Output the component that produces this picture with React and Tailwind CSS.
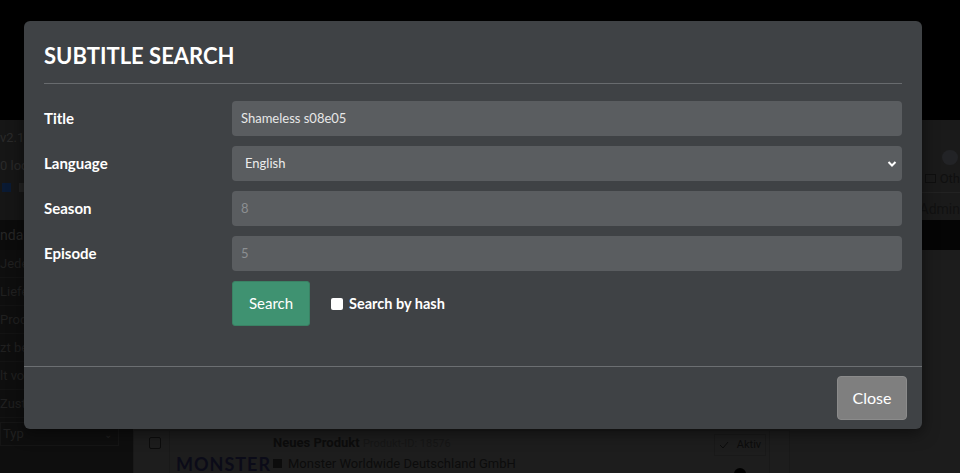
import { useState } from "react";

const fields = [
  { label: "Title", value: "Shameless s08e05", muted: false },
  { label: "Language", value: "English", select: true },
  { label: "Season", value: "8", muted: true },
  { label: "Episode", value: "5", muted: true },
];

const sidebarRows = ["Jedes", "Liefe", "Prod", "zt be", "lt vor", "Zust"];

function Background() {
  return (
    <div className="flex h-full w-full flex-col bg-[#1c1c1c] font-['Roboto',sans-serif]">
      <div className="h-[120px] shrink-0 bg-black" />
      <div className="flex flex-1">
        {/* sidebar */}
        <aside className="flex w-[133px] shrink-0 flex-col bg-[#0e0e0e]">
          <div className="flex h-[100px] flex-col gap-[8px] bg-[#161616] pt-[8px] text-[13px] text-[#2a2a2a]">
            <span>v2.13.</span>
            <span>0 loca</span>
            <div className="flex gap-2 pl-[2px]">
              <span className="h-[9px] w-[9px] bg-[#0a1a33]" />
              <span className="h-[9px] w-[9px] bg-[#222]" />
            </div>
          </div>
          <div className="flex h-[30px] items-center bg-[#0b0b0b] text-[14px] text-[#262626]">ndard</div>
          <div className="flex flex-col">
            {sidebarRows.map((row) => (
              <div key={row} className="flex h-[28px] items-center border-b border-[#131313] text-[13px] text-[#202020]">
                {row}
              </div>
            ))}
            <div className="mt-[4px] mr-[14px] flex h-[24px] items-center justify-between border border-[#151515] pl-[2px] pr-[6px] text-[13px] text-[#202020]">
              <span>Typ</span>
              <span className="text-[10px]">⌄</span>
            </div>
          </div>
        </aside>

        {/* main */}
        <main className="flex flex-1 flex-col">
          <div className="flex h-[100px] flex-col items-end bg-[#1a1a1a]">
            <div className="mt-[30px] mr-[2px] h-[16px] w-[16px] rounded-full bg-[#222326]" />
            <div className="mt-[4px] flex items-center gap-[4px] self-end text-[13px] text-[#0f0f0f]">
              <span className="h-[9px] w-[11px] border border-[#0f0f0f]" />
              <span>Oth</span>
            </div>
            <div className="mt-[4px] h-px w-[40px] bg-[#222]" />
            <div className="mt-[6px] text-[14px] text-[#111]">Admin</div>
          </div>
          <div className="h-[30px] bg-[#050505]" />
          <div className="flex-1 pt-[180px]">
            <div className="mr-[170px] flex h-[100px] border border-[#191919] bg-[#1d1d1d]">
              <div className="w-[36px] border-r border-[#191919] pl-[15px] pt-[6px]">
                <div className="h-[12px] w-[12px] rounded-[2px] border border-[#0c0c0c]" />
              </div>
              <div className="flex w-[103px] items-start pl-[6px] pt-[20px]">
                <span className="font-['Lato',sans-serif] text-[18px] font-bold tracking-[1px] text-[#0b0b18]">MONSTER</span>
              </div>
              <div className="flex flex-1 flex-col pt-[2px] text-[13px] text-[#0c0c0c]">
                <div>
                  <span className="font-bold">Neues Produkt</span>{" "}
                  <span className="text-[11px] text-[#161616]">Produkt-ID: 18576</span>
                </div>
                <div className="mt-[1px] flex items-center gap-[6px]">
                  <span className="h-[9px] w-[9px] bg-[#0c0c0c]" />
                  <span>Monster Worldwide Deutschland GmbH</span>
                </div>
                <div className="mt-[1px] flex items-center gap-[6px]">
                  <span className="h-[9px] w-[9px] rounded-full border border-[#0c0c0c]" />
                  <span>Produkt-Gruppe: monster.de</span>
                </div>
              </div>
              <div className="flex w-[58px] flex-col items-center pt-[3px]">
                <div className="flex h-[22px] items-center gap-[8px] border border-[#191919] px-[4px] text-[11px] text-[#0c0c0c]">
                  <svg width="10" height="8" viewBox="0 0 10 8" fill="none">
                    <path d="M1 4l3 3 5-6" stroke="#0c0c0c" strokeWidth="1" />
                  </svg>
                  <span>Aktiv</span>
                </div>
                <div className="mt-[12px] h-[12px] w-[12px] rounded-full bg-black" />
              </div>
              <div className="w-[20px] border-l border-[#191919]" />
            </div>
          </div>
        </main>
      </div>
    </div>
  );
}

function Field({ field }) {
  return (
    <div className="flex items-center">
      <label className="w-[188px] shrink-0 text-[15px] font-bold text-white">{field.label}</label>
      <div className="flex h-[35px] flex-1 items-center justify-between rounded-[4px] bg-[#5a5d60] text-[13px]">
        {field.select ? (
          <>
            <span className="pl-[13px] text-[#ececec]">{field.value}</span>
            <svg className="mr-[5px]" width="10" height="8" viewBox="0 0 10 8" fill="none">
              <path d="M1.5 2l3.5 3.5L8.5 2" stroke="#ffffff" strokeWidth="2" />
            </svg>
          </>
        ) : (
          <span className={field.muted ? "pl-[9px] text-[#8c8f92]" : "pl-[9px] text-[#e8e8e8]"}>{field.value}</span>
        )}
      </div>
    </div>
  );
}

export default function App() {
  const [byHash, setByHash] = useState(false);

  return (
    <div className="relative h-[473px] w-[960px] overflow-hidden">
      <Background />

      <div className="absolute left-[24px] top-[21px] w-[898px] rounded-[6px] bg-[#3f4245] font-['Lato',sans-serif] shadow-[0_4px_16px_rgba(0,0,0,0.5)]">
        <div className="px-5 pt-[21px]">
          <h2 className="border-b border-[#686b6e] pb-[13px] text-[22px] font-bold leading-[28px] text-white">
            SUBTITLE SEARCH
          </h2>
        </div>

        <div className="flex flex-col gap-[10px] px-5 pt-[17px] pb-[40px]">
          {fields.map((field) => (
            <Field key={field.label} field={field} />
          ))}
          <div className="flex items-center pl-[188px]">
            <button className="h-[45px] w-[78px] rounded-[3px] border border-[#3a8264] bg-[#3f9271] text-[15px] text-white">
              Search
            </button>
            <button
              type="button"
              onClick={() => setByHash(!byHash)}
              className="ml-[21px] flex items-center gap-[6px] text-[14.5px] font-bold text-white"
            >
              <span className="h-[12px] w-[12px] rounded-[2px] bg-white" />
              Search by hash
            </button>
          </div>
        </div>

        <div className="flex justify-end border-t border-[#6c6f72] px-[15px] py-[9px]">
          <button className="h-[44px] w-[70px] rounded-[4px] border border-[#8b8b8b] bg-[#7f7f7f] text-[16px] text-white">
            Close
          </button>
        </div>
      </div>
    </div>
  );
}
